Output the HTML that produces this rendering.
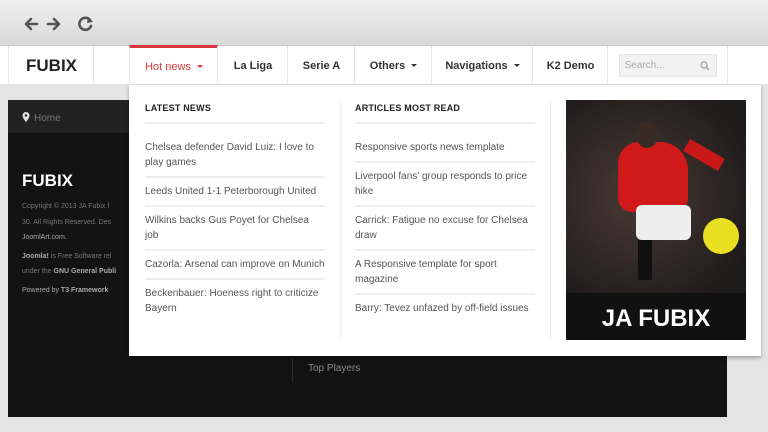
<!DOCTYPE html>
<html><head><meta charset="utf-8">
<style>
*{margin:0;padding:0;box-sizing:border-box}
body{width:768px;height:432px;overflow:hidden;background:#e4e4e4;font-family:"Liberation Sans",sans-serif;position:relative}
.top{position:absolute;left:0;top:0;width:768px;height:46px;background:linear-gradient(#f0f0f0,#d9d9d9);border-bottom:1px solid #c8c8c8}
.nav{position:absolute;left:0;top:46px;width:768px;height:39px;background:#fff;border-bottom:1px solid #e4e4e4}
.cell{position:absolute;top:0;height:39px;border-left:1px solid #e8e8e8;font-size:11px;font-weight:bold;color:#333;display:flex;align-items:center;justify-content:center}
.car{display:inline-block;border-left:3px solid transparent;border-right:3px solid transparent;border-top:3px solid #333;margin-left:6px;vertical-align:middle}
.dark{position:absolute;left:8px;top:100px;width:719px;height:317px;background:#131313}
.crumb{position:absolute;left:8px;top:100px;width:130px;height:33px;background:#222;color:#777;font-size:10px;padding:13px 0 0 26px}
.drop{position:absolute;left:129px;top:85px;width:632px;height:271px;background:#fff;box-shadow:0 2px 4px rgba(0,0,0,.3)}
.col{position:absolute;top:0;width:180px}
.col h4{font-size:9px;font-weight:bold;color:#222;height:39px;padding-top:18px;border-bottom:2px solid #eee;letter-spacing:.2px}
.col div{font-size:10px;color:#555;line-height:15px;padding:6px 0;border-bottom:2px solid #eee}
.col div.f{padding-top:16px}
.ft{position:absolute;left:22px;color:#777;font-size:7px}
</style></head><body>
<div class="top">
<svg width="90" height="46" style="position:absolute;left:10px;top:0">
<g stroke="#555" stroke-width="2.6" fill="none" stroke-linecap="round">
<path d="M16 24H27M16 24L21 19M16 24L21 29"/>
<path d="M38 24H49M49 24L44 19M49 24L44 29"/>
<path d="M80 20A6 6 0 1 0 81 26"/></g>
<path d="M78 17L83 22L77 23Z" fill="#555"/>
</svg>
</div>
<div class="nav">
<div class="cell" style="left:8px;width:86px;font-size:17px;color:#222">FUBIX</div>
<div class="cell" style="left:93px;width:37px"></div>
<div class="cell" style="left:129px;width:89px;color:#d9363b;font-weight:normal;border-top:3px solid #d9363b;top:-1px;height:40px">Hot news<span class="car" style="border-top-color:#d9363b"></span></div>
<div class="cell" style="left:217px;width:71px">La Liga</div>
<div class="cell" style="left:287px;width:68px">Serie A</div>
<div class="cell" style="left:354px;width:78px">Others<span class="car"></span></div>
<div class="cell" style="left:431px;width:102px">Navigations<span class="car"></span></div>
<div class="cell" style="left:532px;width:76px">K2 Demo</div>
<div class="cell" style="left:607px;width:121px;border-right:1px solid #e8e8e8"><div style="width:98px;height:23px;background:#f2f2f2;border:1px solid #e6e6e6;font-weight:normal;color:#aaa;font-size:10px;padding:5px 0 0 5px;position:relative">Search...<svg width="10" height="10" style="position:absolute;right:6px;top:6px"><circle cx="4" cy="4" r="3" stroke="#aaa" stroke-width="1.4" fill="none"/><path d="M6 6L9 9" stroke="#aaa" stroke-width="1.6"/></svg></div></div>
</div>
<div class="dark"></div>
<div class="crumb"><svg width="8" height="10" style="position:absolute;left:14px;top:12px"><path d="M4 0A3.5 3.5 0 0 0 0.5 3.5C0.5 6 4 10 4 10S7.5 6 7.5 3.5A3.5 3.5 0 0 0 4 0Z" fill="#ddd"/><circle cx="4" cy="3.5" r="1.2" fill="#222"/></svg>Home</div>
<div style="position:absolute;left:22px;top:171px;color:#fff;font-weight:bold;font-size:17px">FUBIX</div>
<div class="ft" style="top:203px">Copyright © 2013 JA Fubix f</div>
<div class="ft" style="top:219px">30. All Rights Reserved. Des</div>
<div class="ft" style="top:234px;color:#aaa">JoomlArt.com.</div>
<div class="ft" style="top:253px"><b style="color:#aaa">Joomla!</b> is Free Software rel</div>
<div class="ft" style="top:268px">under the <b style="color:#aaa">GNU General Publi</b></div>
<div class="ft" style="top:287px;color:#aaa">Powered by <b>T3 Framework</b></div>
<div style="position:absolute;left:292px;top:358px;width:1px;height:24px;background:#2a2a2a"></div>
<div style="position:absolute;left:308px;top:363px;color:#888;font-size:10px">Top Players</div>
<div class="drop">
<div class="col" style="left:16px"><h4>LATEST NEWS</h4>
<div class="f">Chelsea defender David Luiz: I love to play games</div>
<div>Leeds United 1-1 Peterborough United</div>
<div>Wilkins backs Gus Poyet for Chelsea job</div>
<div>Cazorla: Arsenal can improve on Munich</div>
<div style="border:none">Beckenbauer: Hoeness right to criticize Bayern</div></div>
<div style="position:absolute;left:211px;top:15px;width:1px;height:240px;background:#eee"></div>
<div class="col" style="left:226px"><h4>ARTICLES MOST READ</h4>
<div class="f">Responsive sports news template</div>
<div>Liverpool fans' group responds to price hike</div>
<div>Carrick: Fatigue no excuse for Chelsea draw</div>
<div>A Responsive template for sport magazine</div>
<div style="border:none">Barry: Tevez unfazed by off-field issues</div></div>
<div style="position:absolute;left:421px;top:15px;width:1px;height:240px;background:#eee"></div>
<div style="position:absolute;left:437px;top:15px;width:180px;height:240px;background:radial-gradient(circle at 40% 40%,#4a3a36,#1d1a1a 70%);overflow:hidden">
<div style="position:absolute;left:52px;top:42px;width:70px;height:70px;background:#d01a1a;border-radius:30% 40% 20% 20%"></div>
<div style="position:absolute;left:70px;top:22px;width:22px;height:26px;background:#3a2a24;border-radius:50%"></div>
<div style="position:absolute;left:118px;top:48px;width:40px;height:14px;background:#c81818;transform:rotate(30deg)"></div>
<div style="position:absolute;left:70px;top:105px;width:55px;height:35px;background:#eee;border-radius:6px"></div>
<div style="position:absolute;left:72px;top:140px;width:14px;height:40px;background:#111"></div>
<div style="position:absolute;left:137px;top:118px;width:36px;height:36px;background:#e8e020;border-radius:50%"></div>
<div style="position:absolute;left:0;top:193px;width:180px;height:47px;background:#111;color:#fff;font-weight:bold;font-size:24px;text-align:center;padding-top:12px">JA FUBIX</div>
</div>
</div>
</body></html>
